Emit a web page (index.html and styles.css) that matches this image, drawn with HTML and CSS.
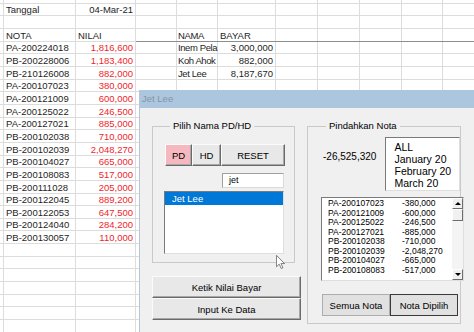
FILE: index.html
```html
<!DOCTYPE html>
<html>
<head>
<meta charset="utf-8">
<title>Jet Lee</title>
<link rel="stylesheet" href="styles.css">
</head>
<body>
<div class="sheet">
  <div class="row r0"></div>
  <div class="row"><span class="ca">Tanggal</span><span class="cb">04-Mar-21</span></div>
  <div class="row"></div>
  <div class="row hdr"><span class="ca">NOTA</span><span class="cb left">NILAI</span><span class="cd">NAMA</span><span class="ce">BAYAR</span><span class="rule"></span></div>
  <div class="row"><span class="ca">PA-200224018</span><span class="cb red">1,816,600</span><span class="cd">Inem Pela</span><span class="ce num">3,000,000</span></div>
  <div class="row"><span class="ca">PB-200228006</span><span class="cb red">1,183,400</span><span class="cd">Koh Ahok</span><span class="ce num">882,000</span></div>
  <div class="row"><span class="ca">PB-210126008</span><span class="cb red">882,000</span><span class="cd">Jet Lee</span><span class="ce num">8,187,670</span></div>
  <div class="row"><span class="ca">PA-200107023</span><span class="cb red">380,000</span></div>
  <div class="row"><span class="ca">PA-200121009</span><span class="cb red">600,000</span></div>
  <div class="row"><span class="ca">PA-200125022</span><span class="cb red">246,500</span></div>
  <div class="row"><span class="ca">PA-200127021</span><span class="cb red">885,000</span></div>
  <div class="row"><span class="ca">PB-200102038</span><span class="cb red">710,000</span></div>
  <div class="row"><span class="ca">PB-200102039</span><span class="cb red">2,048,270</span></div>
  <div class="row"><span class="ca">PB-200104027</span><span class="cb red">665,000</span></div>
  <div class="row"><span class="ca">PB-200108083</span><span class="cb red">517,000</span></div>
  <div class="row"><span class="ca">PB-200111028</span><span class="cb red">205,000</span></div>
  <div class="row"><span class="ca">PB-200122045</span><span class="cb red">889,200</span></div>
  <div class="row"><span class="ca">PB-200122053</span><span class="cb red">647,500</span></div>
  <div class="row"><span class="ca">PB-200124040</span><span class="cb red">284,200</span></div>
  <div class="row"><span class="ca">PB-200130057</span><span class="cb red">110,000</span></div>
  <div class="row"></div>
  <div class="row"></div>
  <div class="row"></div>
  <div class="row"></div>
  <div class="row"></div>
  <div class="row"></div>
  <div class="row"></div>
</div>

<div class="dialog">
  <div class="titlebar">Jet Lee</div>
  <div class="dbody">
    <div class="leftcol">
      <fieldset class="grp grp-left">
        <legend>Pilih Nama PD/HD</legend>
        <div class="btnrow">
          <button class="b3d pd">PD</button>
          <button class="b3d hd">HD</button>
          <button class="b3d reset">RESET</button>
        </div>
        <div class="tbox">jet</div>
        <div class="lb names">
          <div class="sel">Jet Lee</div>
        </div>
      </fieldset>
      <button class="b3d wide first">Ketik Nilai Bayar</button>
      <button class="b3d wide">Input Ke Data</button>
    </div>
    <fieldset class="grp grp-right">
      <legend>Pindahkan Nota</legend>
      <div class="toprow">
        <div class="total">-26,525,320</div>
        <div class="lb months">
          <div>ALL</div>
          <div>January 20</div>
          <div>February 20</div>
          <div>March 20</div>
        </div>
      </div>
      <div class="lb notes">
        <div class="items">
          <div class="it"><span>PA-200107023</span><span>-380,000</span></div>
          <div class="it"><span>PA-200121009</span><span>-600,000</span></div>
          <div class="it"><span>PA-200125022</span><span>-246,500</span></div>
          <div class="it"><span>PA-200127021</span><span>-885,000</span></div>
          <div class="it"><span>PB-200102038</span><span>-710,000</span></div>
          <div class="it"><span>PB-200102039</span><span>-2,048,270</span></div>
          <div class="it"><span>PB-200104027</span><span>-665,000</span></div>
          <div class="it"><span>PB-200108083</span><span>-517,000</span></div>
        </div>
        <div class="sbar">
          <div class="sbtn up"></div>
          <div class="thumb"></div>
          <div class="track"></div>
          <div class="sbtn down"></div>
        </div>
      </div>
      <div class="btnrow2">
        <button class="mb">Semua Nota</button>
        <button class="mb def">Nota Dipilih</button>
      </div>
    </fieldset>
  </div>
</div>

<svg class="cursor" width="9" height="14" viewBox="0 0 12 19">
  <path d="M0.5 0.5 L0.5 16 L4.2 12.4 L7 18.3 L9.3 17.3 L6.6 11.6 L11.5 11.6 Z" fill="#fff" stroke="#555" stroke-width="1"/>
</svg>
</body>
</html>
```

FILE: styles.css
```css
* { box-sizing: border-box; }
html, body { margin: 0; padding: 0; }
body {
  width: 474px;
  height: 332px;
  overflow: hidden;
  position: relative;
  background: #fff;
  font-family: "Liberation Sans", Arial, sans-serif;
}

/* ---------- spreadsheet ---------- */
.sheet {
  display: flex;
  flex-direction: column;
  width: 484px;
  background-image:
    linear-gradient(#dcdcdc, #dcdcdc), linear-gradient(#dcdcdc, #dcdcdc),
    linear-gradient(#dcdcdc, #dcdcdc), linear-gradient(#dcdcdc, #dcdcdc),
    linear-gradient(#dcdcdc, #dcdcdc), linear-gradient(#dcdcdc, #dcdcdc),
    linear-gradient(#dcdcdc, #dcdcdc), linear-gradient(#dcdcdc, #dcdcdc),
    linear-gradient(#dcdcdc, #dcdcdc), linear-gradient(#dcdcdc, #dcdcdc);
  background-size: 1px 100%;
  background-repeat: no-repeat;
  background-position: 3px 0, 75px 0, 135px 0, 176px 0, 217px 0, 275px 0, 317px 0, 359px 0, 401px 0, 442px 0;
}
.row {
  display: grid;
  grid-template-columns: 4px 72px 60px 41px 41px 58px 42px 42px 42px 41px 42px;
  grid-template-rows: 100%;
  height: 12.667px;
  flex: none;
  border-bottom: 1px solid #dcdcdc;
  font-size: 9.5px;
  line-height: 11px;
  color: #1e1e1e;
}
.row.r0 { height: 3.667px; }
.row > span {
  grid-row: 1;
  align-self: end;
  white-space: nowrap;
  overflow: hidden;
  padding: 0 3px 0 2px;
}
.ca { grid-column: 2; }
.cb { grid-column: 3; text-align: right; }
.cb.left { text-align: left; }
.row > .cd {
  grid-column: 5;
  padding: 0 0 0 1px;
  letter-spacing: -0.4px;
}
.ce { grid-column: 6; }
.num { text-align: right; }
.red { color: #f0252b; }
.row > .rule {
  grid-column: 4 / -1;
  align-self: end;
  height: 1px;
  margin-bottom: -1px;
  padding: 0;
  background: #8e8e8e;
}

/* ---------- dialog ---------- */
.dialog {
  position: absolute;
  left: 139px;
  top: 90px;
  width: 345px;
  height: 250px;
  background: #f0f0f0;
  border-left: 1px solid #b4c6d8;
  font-size: 9.5px;
  color: #000;
}
.titlebar {
  height: 18px;
  background: #abc6de;
  color: #8596a7;
  line-height: 18px;
  padding-left: 2px;
}
.dbody {
  display: flex;
  align-items: flex-start;
  gap: 6px;
  padding: 12px 0 0 12px;
}
.leftcol {
  width: 149px;
  display: flex;
  flex-direction: column;
}
.grp {
  margin: 0;
  min-width: 0;
  border: 1px solid #c9c9c9;
}
.grp legend {
  padding: 0 3px;
  margin-left: 5px;
  line-height: 12px;
  font-size: 9.5px;
}
.grp-left {
  width: 143px;
  height: 143px;
  padding: 12px 0 0 12px;
}
.btnrow { display: flex; }
button {
  font: inherit;
  color: #000;
  margin: 0;
  padding: 0;
}
.b3d {
  height: 22px;
  background: #e8e8e8;
  border: 1px solid;
  border-color: #fbfbfb #6a6a6a #6a6a6a #fbfbfb;
  box-shadow: inset -1px -1px #a8a8a8;
}
.pd { width: 27px; background: #f6b8bf; }
.hd { width: 29px; }
.reset { width: 64px; }
.tbox {
  width: 62px;
  height: 15px;
  margin: 7px 0 0 57px;
  background: #fff;
  border: 1px solid;
  border-color: #a0a0a0 #dadada #dadada #a0a0a0;
  padding-left: 6px;
  font-size: 9px;
  line-height: 13px;
}
.lb {
  background: #fff;
  border: 1px solid;
  border-color: #7a7a7a #dedede #dedede #7a7a7a;
}
.names {
  width: 120px;
  height: 63px;
  margin: 3px 0 0 -1px;
}
.sel {
  height: 13px;
  line-height: 13px;
  background: #0078d7;
  color: #fff;
  padding-left: 7px;
}
.wide { width: 149px; }
.wide.first { margin-top: 13px; }

.grp-right {
  width: 154px;
  height: 204px;
  padding: 5px 0 0 13px;
}
.toprow {
  display: flex;
  align-items: flex-start;
}
.total {
  width: 62px;
  margin: 14px 0 0 2px;
  font-size: 10px;
  line-height: 12px;
}
.months {
  width: 76px;
  height: 54px;
  padding: 3px 0 0 9px;
  font-size: 10.5px;
  line-height: 12px;
}
.notes {
  display: flex;
  width: 143px;
  height: 84px;
  margin-top: 6px;
}
.items {
  flex: 1;
  padding: 1px 0 0 6px;
  font-size: 8.5px;
  line-height: 9.5px;
}
.it { display: flex; height: 9.5px; }
.it span:first-child { width: 74px; }
.sbar {
  width: 11px;
  display: flex;
  flex-direction: column;
  background: #f4f4f4;
}
.sbtn, .thumb {
  height: 11px;
  background: #f0f0f0;
  border: 1px solid;
  border-color: #fff #6d6d6d #6d6d6d #fff;
  display: flex;
  align-items: center;
  justify-content: center;
}
.thumb { height: 12px; }
.track { flex: 1; }
.sbtn::after {
  content: "";
  border-left: 3px solid transparent;
  border-right: 3px solid transparent;
}
.up::after { border-bottom: 3px solid #000; }
.down::after { border-top: 3px solid #000; }

.btnrow2 {
  display: flex;
  margin: 13px 0 0 1px;
}
.mb {
  width: 68px;
  height: 22px;
  background: #e1e1e1;
  border: 1px solid #adadad;
}
.mb.def { border-color: #3a3a3a; }

.cursor {
  position: absolute;
  left: 276px;
  top: 255px;
}
```
